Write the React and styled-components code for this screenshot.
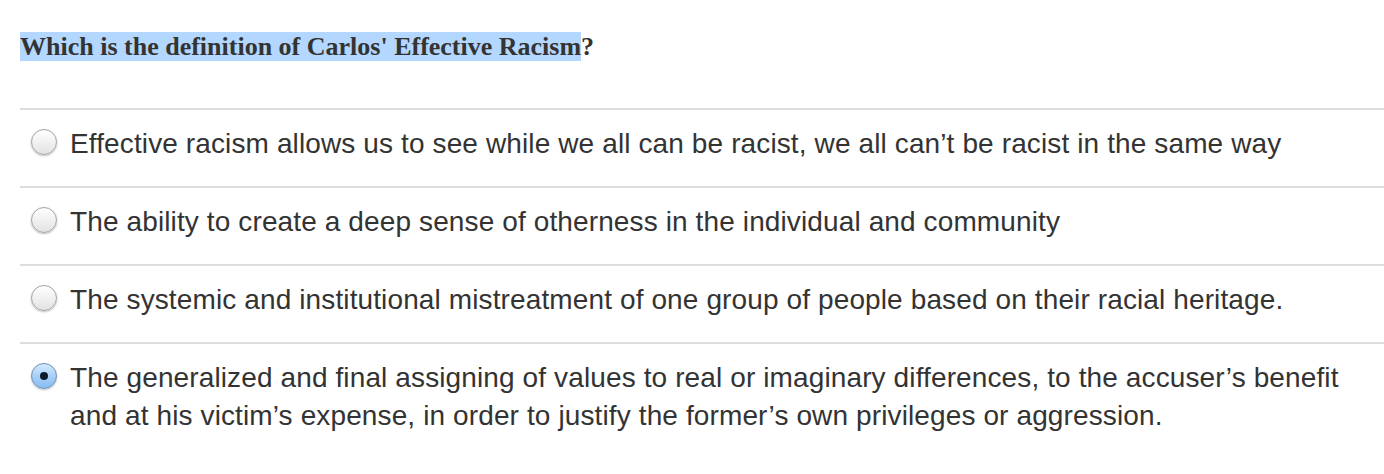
import styled, { createGlobalStyle } from "styled-components";

const GlobalStyle = createGlobalStyle`
  body {
    margin: 0;
    background: #fff;
  }
`;

const Page = styled.div`
  padding: 30px 0 0 20px;
  color: #333;
`;

const Question = styled.h2`
  margin: 0;
  font-family: "Liberation Serif", "Times New Roman", serif;
  font-weight: 700;
  font-size: 26px;
  line-height: 33px;
`;

const Selected = styled.span`
  background: #b3d7fe;
`;

const Answers = styled.ul`
  list-style: none;
  margin: 45px 0 0;
  padding: 0;
`;

const Answer = styled.li`
  display: flex;
  align-items: flex-start;
  gap: 13px;
  padding: 15px 0 23px 11px;
  border-top: 2px solid #dddddd;
`;

const Radio = styled.span`
  flex: none;
  position: relative;
  width: 26px;
  height: 26px;
  margin-top: 4px;
  box-sizing: border-box;
  border-radius: 50%;
  border: 1px solid ${(p) => (p.checked ? "#6d8fb3" : "#a3a3a3")};
  background: ${(p) =>
    p.checked
      ? "linear-gradient(#d6ebff, #a9d0f7 50%, #86bdf2)"
      : "linear-gradient(#ffffff, #f1f1f1 50%, #e2e2e2)"};
  box-shadow: 0 1px 2px rgba(0, 0, 0, 0.25);

  &::after {
    content: "";
    display: ${(p) => (p.checked ? "block" : "none")};
    position: absolute;
    left: 50%;
    top: 50%;
    width: 8px;
    height: 8px;
    margin: -4px 0 0 -4px;
    border-radius: 50%;
    background: #0d1a2b;
  }
`;

const Label = styled.span`
  font-family: "Liberation Sans", Helvetica, Arial, sans-serif;
  font-size: 28px;
  line-height: 38px;
  letter-spacing: 0.12px;
  color: #333;
  padding-right: 20px;
`;

const answers = [
  "Effective racism allows us to see while we all can be racist, we all can’t be racist in the same way",
  "The ability to create a deep sense of otherness in the individual and community",
  "The systemic and institutional mistreatment of one group of people based on their racial heritage.",
  "The generalized and final assigning of values to real or imaginary differences, to the accuser’s benefit and at his victim’s expense, in order to justify the former’s own privileges or aggression.",
];

const App = () => {
  return (
    <Page>
      <GlobalStyle />
      <Question>
        <Selected>Which is the definition of Carlos' Effective Racism</Selected>?
      </Question>
      <Answers>
        {answers.map((text, i) => (
          <Answer key={i}>
            <Radio checked={i === 3} />
            <Label>{text}</Label>
          </Answer>
        ))}
      </Answers>
    </Page>
  );
};

export default App;
